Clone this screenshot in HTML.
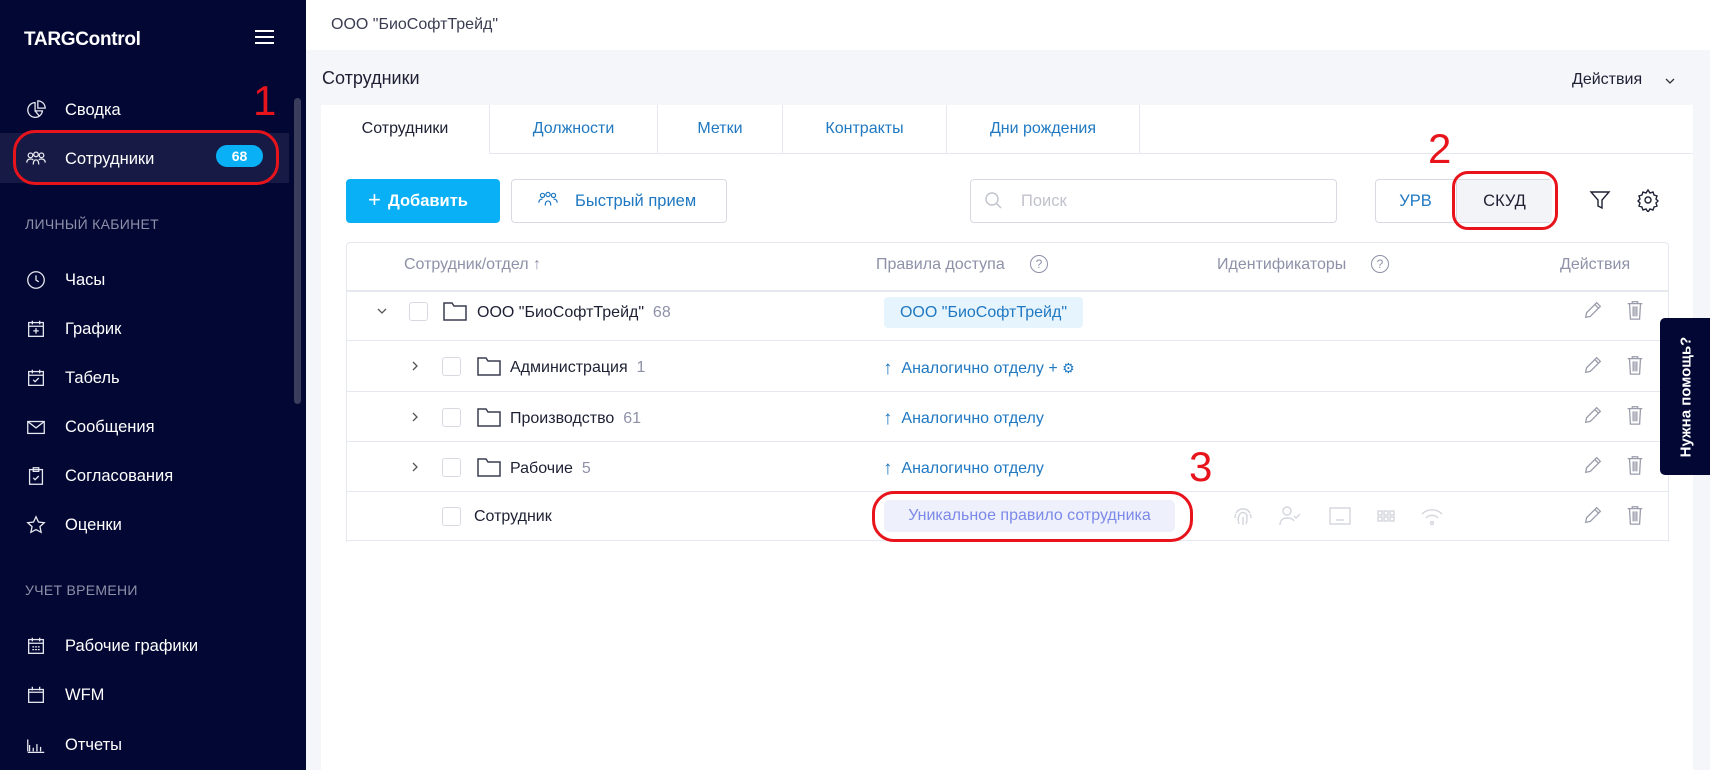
<!DOCTYPE html>
<html><head><meta charset="utf-8"><style>
*{box-sizing:border-box;margin:0;padding:0}
body{width:1710px;height:770px;overflow:hidden;background:#f5f6fa;font-family:"Liberation Sans",sans-serif;position:relative;color:#1d2033}
.a{position:absolute}
#sb{left:0;top:0;width:306px;height:770px;background:#030733;color:#fff}
.ni{position:absolute;left:0;width:306px;height:30px;font-size:16.5px;display:flex;align-items:center}
.ni svg{position:absolute;left:25px;width:22px;height:22px;fill:none;stroke:#e8e9f0;stroke-width:1.4}
.ni span{position:absolute;left:65px}
.sec{position:absolute;left:25px;font-size:14px;color:#8e91a8;letter-spacing:.3px}
.red{color:#e8141c;font-size:42px;font-family:"Liberation Sans",sans-serif;position:absolute;line-height:1}
.tab{position:absolute;top:105px;height:49px;border-right:1px solid #e6e8ef;border-bottom:1px solid #e6e8ef;font-size:16px;color:#1f78c1;display:flex;align-items:center;justify-content:center}
.row{position:absolute;left:346px;width:1323px;border-bottom:1px solid #e6e8ef;font-size:16px}
.cb{position:absolute;width:19px;height:19px;border:1px solid #d8dae3;border-radius:3px;background:#fff}
.fold{position:absolute;width:24px;height:20px}
.acc{position:absolute;left:883px;color:#1f78c1;font-size:16px}
.acc b{font-weight:bold;font-size:19px;position:relative;top:1px}
.cnt{color:#8e91a8}
.ic{position:absolute;width:22px;height:22px;fill:none;stroke:#9a9cab;stroke-width:1.4}
.idi{position:absolute;width:24px;height:24px;fill:none;stroke:#d4d6de;stroke-width:1.4}
</style></head><body>
<div id="sb" class="a">
<div class="a" style="left:24px;top:29px;font-size:19px;font-weight:bold;letter-spacing:-.3px">TARGControl</div>
<div class="a" style="left:255px;top:30px;width:19px;height:2px;background:#fff;box-shadow:0 6px 0 #fff,0 12px 0 #fff"></div>
<div class="a" style="left:294px;top:98px;width:7px;height:306px;background:#3a3d5c;border-radius:4px"></div>
<div class="a" style="left:0;top:133px;width:289px;height:50px;background:#161a44"></div>
<div class="ni" style="top:95px"><svg viewBox="0 0 24 24"><path d="M11 4a8 8 0 1 0 8 9h-8z"/><path d="M14 2v8h8a8 8 0 0 0-8-8z"/><path d="M11 13l5 6"/></svg><span>Сводка</span></div>
<div class="ni" style="top:144px"><svg viewBox="0 0 24 24"><circle cx="6" cy="8" r="2.5"/><circle cx="12" cy="7" r="2.5"/><circle cx="18" cy="8" r="2.5"/><path d="M2 16c0-3 2-4 4-4s3 1 3 1M9 18c0-3 1-5 3-5s3 2 3 5M15 13s1-1 3-1 4 1 4 4"/></svg><span>Сотрудники</span></div>
<div class="a" style="left:216px;top:145px;width:47px;height:22px;border-radius:11px;background:#0ab0f5;font-size:14px;font-weight:bold;text-align:center;line-height:22px">68</div>
<div class="a" style="left:13px;top:130px;width:266px;height:55px;border:3px solid #e8141c;border-radius:22px"></div>
<div class="red" style="left:253px;top:80px">1</div>
<div class="sec" style="top:216px">ЛИЧНЫЙ КАБИНЕТ</div>
<div class="ni" style="top:265px"><svg viewBox="0 0 24 24"><circle cx="12" cy="12" r="9"/><path d="M12 7v5l3 2"/></svg><span>Часы</span></div>
<div class="ni" style="top:314px"><svg viewBox="0 0 24 24"><rect x="4" y="5" width="16" height="15"/><path d="M4 9h16M8 3v4M16 3v4M12 11v6M9 14h6"/></svg><span>График</span></div>
<div class="ni" style="top:363px"><svg viewBox="0 0 24 24"><rect x="4" y="5" width="16" height="15"/><path d="M4 9h16M8 3v4M16 3v4M9 14l2 2 4-4"/></svg><span>Табель</span></div>
<div class="ni" style="top:412px"><svg viewBox="0 0 24 24"><rect x="3" y="6" width="18" height="13"/><path d="M3 6l9 7 9-7"/></svg><span>Сообщения</span></div>
<div class="ni" style="top:461px"><svg viewBox="0 0 24 24"><rect x="5" y="5" width="14" height="16"/><path d="M9 3h6v4H9zM9 14l2 2 4-4"/></svg><span>Согласования</span></div>
<div class="ni" style="top:510px"><svg viewBox="0 0 24 24"><path d="M12 3l2.7 5.8 6.3.7-4.7 4.3 1.3 6.2L12 17l-5.6 3 1.3-6.2L3 9.5l6.3-.7z"/></svg><span>Оценки</span></div>
<div class="sec" style="top:582px">УЧЕТ ВРЕМЕНИ</div>
<div class="ni" style="top:631px"><svg viewBox="0 0 24 24"><rect x="4" y="5" width="16" height="15"/><path d="M4 9h16M8 3v4M16 3v4M8 13h2M11 13h2M14 13h2M8 16h2M11 16h2M14 16h2"/></svg><span>Рабочие графики</span></div>
<div class="ni" style="top:680px"><svg viewBox="0 0 24 24"><rect x="4" y="6" width="16" height="14"/><path d="M4 9h16M8 3v4M16 3v4"/></svg><span>WFM</span></div>
<div class="ni" style="top:730px"><svg viewBox="0 0 24 24"><path d="M3 20h18M5 19v-7M9 19v-4M13 19v-8M17 19v-5M3 19V6"/></svg><span>Отчеты</span></div>
</div>
<div class="a" style="left:306px;top:0;width:1404px;height:50px;background:#fff"></div>
<div class="a" style="left:331px;top:16px;font-size:16px;color:#3a3d52">ООО "БиоСофтТрейд"</div>
<div class="a" style="left:322px;top:68px;font-size:18px;color:#1d2033">Сотрудники</div>
<div class="a" style="left:1572px;top:71px;font-size:16px">Действия</div>
<svg class="a" style="left:1664px;top:76px" width="12" height="10" viewBox="0 0 12 10"><path d="M2 3l4 4 4-4" fill="none" stroke="#333" stroke-width="1.3"/></svg>
<div class="a" style="left:321px;top:105px;width:1372px;height:665px;background:#fff"></div>
<div class="a" style="left:321px;top:153px;width:1372px;height:1px;background:#e6e8ef"></div>
<div class="tab" style="left:321px;width:169px;color:#1d2033;border-bottom-color:#fff">Сотрудники</div>
<div class="tab" style="left:490px;width:168px">Должности</div>
<div class="tab" style="left:658px;width:125px">Метки</div>
<div class="tab" style="left:783px;width:164px">Контракты</div>
<div class="tab" style="left:947px;width:193px">Дни рождения</div>
<div class="a" style="left:346px;top:179px;width:154px;height:44px;background:#0ab0f5;border-radius:4px;color:#fff;font-size:16.5px;font-weight:bold;line-height:44px;padding-left:24px"><span style="font-size:22px;font-weight:normal;position:absolute;left:22px;top:-1px">+</span><span style="margin-left:18px">Добавить</span></div>
<div class="a" style="left:511px;top:179px;width:216px;height:44px;border:1px solid #d8dae3;border-radius:4px;color:#1f78c1;font-size:16.5px;line-height:42px;padding-left:63px">Быстрый прием</div>
<svg class="a" style="left:536px;top:189px" width="24" height="22" viewBox="0 0 24 24" fill="none" stroke="#1f78c1" stroke-width="1.3"><circle cx="6" cy="7" r="2.3"/><circle cx="12" cy="6" r="2.3"/><circle cx="18" cy="7" r="2.3"/><path d="M2 15c0-3 2-4 4-4M9 18c0-3 1-5 3-5s3 2 3 5M18 11c2 0 4 1 4 4"/></svg>
<div class="a" style="left:970px;top:179px;width:367px;height:44px;border:1px solid #d8dae3;border-radius:4px;color:#c0c2cc;font-size:16.5px;line-height:42px;padding-left:50px">Поиск</div>
<svg class="a" style="left:984px;top:191px" width="20" height="20" viewBox="0 0 20 20" fill="none" stroke="#c0c2cc" stroke-width="1.4"><circle cx="8" cy="8" r="6"/><path d="M12.5 12.5L17 17"/></svg>
<div class="a" style="left:1375px;top:179px;width:177px;height:44px;border:1px solid #d8dae3;border-radius:4px"></div>
<div class="a" style="left:1456px;top:180px;width:96px;height:42px;background:#f3f4f8;border-left:1px solid #d8dae3;font-size:16.5px;text-align:center;line-height:42px">СКУД</div>
<div class="a" style="left:1375px;top:179px;width:81px;height:44px;color:#1f78c1;font-size:16.5px;text-align:center;line-height:44px">УРВ</div>
<div class="a" style="left:1452px;top:171px;width:106px;height:59px;border:3px solid #e8141c;border-radius:16px"></div>
<div class="red" style="left:1428px;top:128px">2</div>
<svg class="a" style="left:1588px;top:188px" width="24" height="24" viewBox="0 0 24 24" fill="none" stroke="#1d2033" stroke-width="1.4"><path d="M3 4h18l-7 8v8l-4-2v-6z"/></svg>
<svg class="a" style="left:1636px;top:188px" width="24" height="24" viewBox="0 0 24 24" fill="none" stroke="#1d2033" stroke-width="1.4"><circle cx="12" cy="12" r="3"/><path d="M12 2l2 3 3-1 1 3 3 1-1 3 2 2-2 2 1 3-3 1-1 3-3-1-2 3-2-3-3 1-1-3-3-1 1-3-2-2 2-2-1-3 3-1 1-3 3 1z"/></svg>
<div class="a" style="left:346px;top:242px;width:1323px;height:300px;border:1px solid #e6e8ef;border-bottom:none;border-radius:4px 4px 0 0"></div>
<div class="row" style="top:242px;height:50px;color:#8e91a8;border-bottom:2px solid #e6e8ef">
<span class="a" style="left:58px;top:14px">Сотрудник/отдел ↑</span>
<span class="a" style="left:530px;top:14px">Правила доступа</span>
<span class="a" style="left:684px;top:13px;width:18px;height:18px;border:1.4px solid #8e91a8;border-radius:50%;font-size:12px;text-align:center;line-height:16px">?</span>
<span class="a" style="left:871px;top:14px">Идентификаторы</span>
<span class="a" style="left:1025px;top:13px;width:18px;height:18px;border:1.4px solid #8e91a8;border-radius:50%;font-size:12px;text-align:center;line-height:16px">?</span>
<span class="a" style="left:1214px;top:14px">Действия</span>
</div>
<div class="row" style="top:292px;height:49px"></div>
<div class="row" style="top:341px;height:51px"></div>
<div class="row" style="top:392px;height:50px"></div>
<div class="row" style="top:442px;height:50px"></div>
<div class="row" style="top:492px;height:49px"></div>
<svg class="a" style="left:376px;top:305px" width="12" height="12" viewBox="0 0 12 12"><path d="M2 4l4 4 4-4" fill="none" stroke="#555" stroke-width="1.3"/></svg>
<div class="cb" style="left:409px;top:302px"></div>
<svg class="fold" style="left:443px;top:301px" viewBox="0 0 24 20" fill="none" stroke="#3a3d52" stroke-width="1.5"><path d="M1 2h8l2 3h12v14H1z"/></svg>
<div class="a" style="left:477px;top:304px;font-size:16px">ООО "БиоСофтТрейд" <span class="cnt">&nbsp;68</span></div>
<div class="a" style="left:884px;top:297px;width:199px;height:31px;background:#e6f4fd;border-radius:4px;color:#1f78c1;font-size:16px;text-align:center;line-height:31px">ООО "БиоСофтТрейд"</div>
<svg class="a" style="left:409px;top:360px" width="12" height="12" viewBox="0 0 12 12"><path d="M4 2l4 4-4 4" fill="none" stroke="#555" stroke-width="1.3"/></svg>
<div class="cb" style="left:442px;top:357px"></div>
<svg class="fold" style="left:477px;top:356px" viewBox="0 0 24 20" fill="none" stroke="#3a3d52" stroke-width="1.5"><path d="M1 2h8l2 3h12v14H1z"/></svg>
<div class="a" style="left:510px;top:359px;font-size:16px">Администрация <span class="cnt">&nbsp;1</span></div>
<div class="acc" style="top:357px"><b>↑</b>&nbsp; Аналогично отделу + <span style="font-size:14px">⚙</span></div>
<svg class="a" style="left:409px;top:411px" width="12" height="12" viewBox="0 0 12 12"><path d="M4 2l4 4-4 4" fill="none" stroke="#555" stroke-width="1.3"/></svg>
<div class="cb" style="left:442px;top:408px"></div>
<svg class="fold" style="left:477px;top:407px" viewBox="0 0 24 20" fill="none" stroke="#3a3d52" stroke-width="1.5"><path d="M1 2h8l2 3h12v14H1z"/></svg>
<div class="a" style="left:510px;top:410px;font-size:16px">Производство <span class="cnt">&nbsp;61</span></div>
<div class="acc" style="top:407px"><b>↑</b>&nbsp; Аналогично отделу</div>
<svg class="a" style="left:409px;top:461px" width="12" height="12" viewBox="0 0 12 12"><path d="M4 2l4 4-4 4" fill="none" stroke="#555" stroke-width="1.3"/></svg>
<div class="cb" style="left:442px;top:458px"></div>
<svg class="fold" style="left:477px;top:457px" viewBox="0 0 24 20" fill="none" stroke="#3a3d52" stroke-width="1.5"><path d="M1 2h8l2 3h12v14H1z"/></svg>
<div class="a" style="left:510px;top:460px;font-size:16px">Рабочие <span class="cnt">&nbsp;5</span></div>
<div class="acc" style="top:457px"><b>↑</b>&nbsp; Аналогично отделу</div>
<div class="cb" style="left:442px;top:507px"></div>
<div class="a" style="left:474px;top:508px;font-size:16px">Сотрудник</div>
<div class="a" style="left:884px;top:500px;width:291px;height:32px;background:#eef0fb;border-radius:5px;color:#7b89e8;font-size:16px;text-align:center;line-height:32px">Уникальное правило сотрудника</div>
<div class="a" style="left:872px;top:491px;width:321px;height:51px;border:3px solid #e8141c;border-radius:22px"></div>
<div class="red" style="left:1189px;top:446px">3</div>
<svg class="idi" style="left:1231px;top:504px" viewBox="0 0 24 24"><path d="M5 9a8 8 0 0 1 14 0M4 14c0-2 0-3 1-4M8 20c-1-3-1-6 0-8a4 4 0 0 1 8 1c0 3 0 5-1 7M12 13v8M20 14c0-1 0-2-1-4"/></svg>
<svg class="idi" style="left:1278px;top:504px" viewBox="0 0 24 24"><circle cx="9" cy="7" r="4"/><path d="M2 21c0-5 3-7 7-7s6 1 7 3M16 12l2 2 4-4"/></svg>
<svg class="idi" style="left:1328px;top:504px" viewBox="0 0 24 24"><rect x="2" y="4" width="20" height="16"/><path d="M8 16h8"/></svg>
<svg class="idi" style="left:1374px;top:504px" viewBox="0 0 24 24"><rect x="4" y="7" width="4" height="4"/><rect x="10" y="7" width="4" height="4"/><rect x="16" y="7" width="4" height="4"/><rect x="4" y="13" width="4" height="4"/><rect x="10" y="13" width="4" height="4"/><rect x="16" y="13" width="4" height="4"/></svg>
<svg class="idi" style="left:1420px;top:504px" viewBox="0 0 24 24"><path d="M2 10a14 14 0 0 1 20 0M6 14a8 8 0 0 1 12 0"/><circle cx="12" cy="19" r="1.5"/></svg>
<svg class="ic" style="left:1582px;top:299px" viewBox="0 0 24 24"><path d="M4 20l1-5L16 4l4 4L9 19zM14 6l4 4"/></svg>
<svg class="ic" style="left:1624px;top:299px" viewBox="0 0 24 24"><path d="M4 5h16M9 5V3h6v2M6 5l1 17h10l1-17M10 8v11M12 8v11M14 8v11"/></svg>
<svg class="ic" style="left:1582px;top:354px" viewBox="0 0 24 24"><path d="M4 20l1-5L16 4l4 4L9 19zM14 6l4 4"/></svg>
<svg class="ic" style="left:1624px;top:354px" viewBox="0 0 24 24"><path d="M4 5h16M9 5V3h6v2M6 5l1 17h10l1-17M10 8v11M12 8v11M14 8v11"/></svg>
<svg class="ic" style="left:1582px;top:404px" viewBox="0 0 24 24"><path d="M4 20l1-5L16 4l4 4L9 19zM14 6l4 4"/></svg>
<svg class="ic" style="left:1624px;top:404px" viewBox="0 0 24 24"><path d="M4 5h16M9 5V3h6v2M6 5l1 17h10l1-17M10 8v11M12 8v11M14 8v11"/></svg>
<svg class="ic" style="left:1582px;top:454px" viewBox="0 0 24 24"><path d="M4 20l1-5L16 4l4 4L9 19zM14 6l4 4"/></svg>
<svg class="ic" style="left:1624px;top:454px" viewBox="0 0 24 24"><path d="M4 5h16M9 5V3h6v2M6 5l1 17h10l1-17M10 8v11M12 8v11M14 8v11"/></svg>
<svg class="ic" style="left:1582px;top:504px" viewBox="0 0 24 24"><path d="M4 20l1-5L16 4l4 4L9 19zM14 6l4 4"/></svg>
<svg class="ic" style="left:1624px;top:504px" viewBox="0 0 24 24"><path d="M4 5h16M9 5V3h6v2M6 5l1 17h10l1-17M10 8v11M12 8v11M14 8v11"/></svg>
<div class="a" style="left:1660px;top:318px;width:52px;height:157px;background:#030733;border-radius:5px 0 0 5px"></div>
<div class="a" style="left:1608px;top:387px;width:157px;height:20px;transform:rotate(-90deg);color:#fff;font-size:15px;font-weight:bold;text-align:center;line-height:20px">Нужна помощь?</div>
</body></html>
